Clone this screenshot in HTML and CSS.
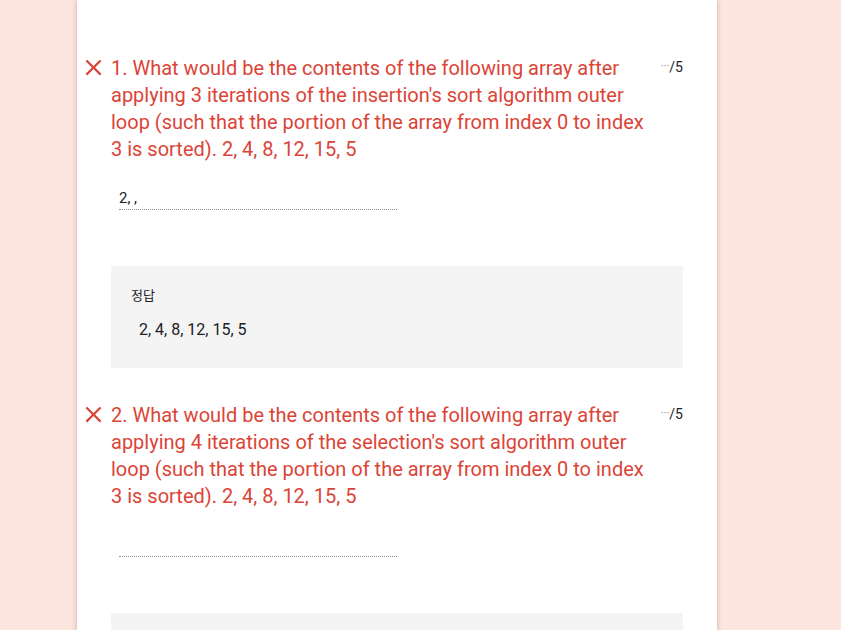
FILE: index.html
```html
<!DOCTYPE html>
<html lang="ko">
<head>
    <meta charset="UTF-8">
    <meta name="viewport" content="width=device-width, initial-scale=1.0">
    <title>퀴즈 결과</title>
    <link rel="stylesheet" href="styles.css">
</head>
<body>

    <div class="card">

        <div class="question">
            <div class="question-header">
                <svg class="wrong-icon" viewBox="0 0 24 24" width="27" height="27">
                    <path d="M19 6.41L17.59 5 12 10.59 6.41 5 5 6.41 10.59 12 5 17.59 6.41 19 12 13.41 17.59 19 19 17.59 13.41 12z"/>
                </svg>
                <div class="question-title">1. What would be the contents of the following array after applying 3 iterations of the insertion's sort algorithm outer loop (such that the portion of the array from index 0 to index 3 is sorted). 2, 4, 8, 12, 15, 5</div>
                <div class="points"><span class="points-dots">···</span>/5</div>
            </div>
            <div class="question-body">
                <div class="answer-input">2, ,</div>
                <div class="correct-box">
                    <div class="correct-label">정답</div>
                    <div class="correct-value">2, 4, 8, 12, 15, 5</div>
                </div>
            </div>
        </div>

        <div class="question">
            <div class="question-header">
                <svg class="wrong-icon" viewBox="0 0 24 24" width="27" height="27">
                    <path d="M19 6.41L17.59 5 12 10.59 6.41 5 5 6.41 10.59 12 5 17.59 6.41 19 12 13.41 17.59 19 19 17.59 13.41 12z"/>
                </svg>
                <div class="question-title">2. What would be the contents of the following array after applying 4 iterations of the selection's sort algorithm outer loop (such that the portion of the array from index 0 to index 3 is sorted). 2, 4, 8, 12, 15, 5</div>
                <div class="points"><span class="points-dots">···</span>/5</div>
            </div>
            <div class="question-body">
                <div class="answer-input"></div>
                <div class="correct-box">
                    <div class="correct-label">정답</div>
                    <div class="correct-value">2, 4, 8, 12, 15, 5</div>
                </div>
            </div>
        </div>

    </div>

</body>
</html>
```

FILE: styles.css
```css
body {
    margin: 0;
    background-color: #fde6e0;
    font-family: Roboto, "Noto Sans CJK KR", Arial, sans-serif;
    color: #202124;
    height: 630px;
    overflow: hidden;
}
.card {
    width: 640px;
    margin-left: 77px;
    min-height: 700px;
    background-color: #ffffff;
    box-shadow: 0 0 5px rgba(120, 60, 50, 0.35);
    padding: 55px 34px 0 3px;
    box-sizing: border-box;
}
.question {
    margin-bottom: 34px;
}
.question-header {
    display: flex;
    gap: 4px;
}
.wrong-icon {
    flex: none;
    margin-top: -1px;
    fill: #db4437;
}
.question-title {
    width: 540px;
    font-size: 20px;
    line-height: 27px;
    color: #db4437;
}
.points {
    margin-left: auto;
    margin-top: 4px;
    font-size: 14px;
    line-height: 16px;
    color: #202124;
}
.points-dots {
    font-size: 11px;
    color: #80868b;
    vertical-align: 2px;
}
.question-body {
    margin-left: 31px;
}
.answer-input {
    width: 278px;
    height: 20px;
    margin: 25px 0 0 8px;
    padding-bottom: 1px;
    border-bottom: 1px dotted #8a8a8a;
    font-size: 15px;
    line-height: 20px;
}
.correct-box {
    margin-top: 56px;
    padding: 20px 20px 28px;
    background-color: #f4f4f4;
}
.correct-label {
    font-size: 13px;
    line-height: 20px;
}
.correct-value {
    margin: 14px 0 0 8px;
    font-size: 16px;
    line-height: 20px;
}
```
